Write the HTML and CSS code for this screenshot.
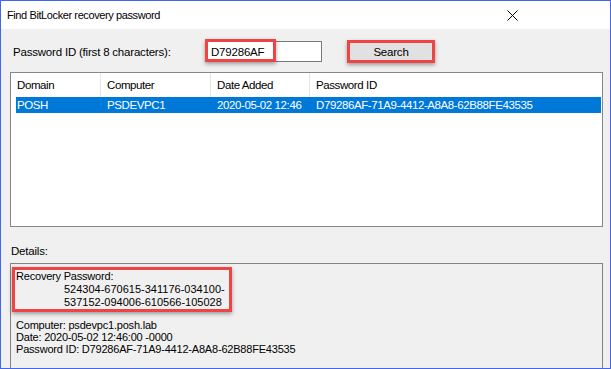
FILE: index.html
```html
<!DOCTYPE html>
<html lang="en">
<head>
    <meta charset="UTF-8">
    <title>Find BitLocker recovery password</title>
    <link rel="stylesheet" href="styles.css">
</head>
<body>
    <div class="window">
        <div class="titlebar">
            <span class="title">Find BitLocker recovery password</span>
            <svg class="close" width="11" height="11" viewBox="0 0 11 11">
                <path d="M0.5 0.5 L10.5 10.5 M10.5 0.5 L0.5 10.5" stroke="#000" stroke-width="1" fill="none"/>
            </svg>
        </div>
        <div class="content">
            <div class="search-row">
                <label class="search-label">Password ID (first 8 characters):</label>
                <div class="textbox">
                    <span class="value">D79286AF</span>
                    <span class="mark mark-id"></span>
                </div>
                <button class="btn">Search</button>
            </div>

            <div class="list">
                <div class="list-head">
                    <div class="col">Domain</div>
                    <div class="col">Computer</div>
                    <div class="col">Date Added</div>
                    <div class="col">Password ID</div>
                </div>
                <div class="list-row selected">
                    <div class="col">POSH</div>
                    <div class="col">PSDEVPC1</div>
                    <div class="col">2020-05-02 12:46</div>
                    <div class="col">D79286AF-71A9-4412-A8A8-62B88FE43535</div>
                </div>
            </div>

            <div class="details-label">Details:</div>
            <div class="details">
                <div class="recovery">
                    <div>Recovery Password:</div>
                    <div class="key">524304-670615-341176-034100-</div>
                    <div class="key">537152-094006-610566-105028</div>
                </div>
                <div class="info">
                    <div>Computer: psdevpc1.posh.lab</div>
                    <div>Date: 2020-05-02 12:46:00 -0000</div>
                    <div>Password ID: D79286AF-71A9-4412-A8A8-62B88FE43535</div>
                </div>
            </div>
        </div>
    </div>
</body>
</html>
```

FILE: styles.css
```css
:root {
    --face: #f0f0f0;
    --frame: #4167f0;
    --select: #0078d7;
    --mark: #ee4444;
}

body {
    margin: 0;
    font-family: 'Liberation Sans', Arial, sans-serif;
    font-size: 11px;
    letter-spacing: -0.2px;
    color: #000;
}

.window {
    width: 611px;
    height: 369px;
    box-sizing: border-box;
    border: 1px solid var(--frame);
    background: var(--face);
    display: flex;
    flex-direction: column;
    overflow: hidden;
}

.titlebar {
    height: 28px;
    flex-shrink: 0;
    background: #fff;
    display: flex;
    align-items: center;
    justify-content: space-between;
    padding-left: 6px;
}

.title {
    font-size: 11px;
    letter-spacing: -0.4px;
}

.close {
    margin-right: 92px;
}

.content {
    flex: 1;
    display: flex;
    flex-direction: column;
    padding: 0 7px 0 9px;
    min-height: 0;
}

.search-row {
    display: flex;
    align-items: center;
    margin-top: 11px;
    height: 23px;
}

.search-label {
    width: 194px;
    padding-left: 3px;
    font-size: 11.5px;
    letter-spacing: -0.2px;
}

.textbox {
    position: relative;
    width: 115px;
    height: 21px;
    box-sizing: border-box;
    border: 1px solid #7a7a7a;
    background: #fff;
    display: flex;
    align-items: center;
    padding-left: 3px;
    font-size: 11.5px;
    letter-spacing: -0.2px;
}

.mark {
    position: absolute;
    border: 3px solid var(--mark);
    box-shadow: 0 2px 4px rgba(0, 0, 0, 0.35);
}

.mark-id {
    left: -3px;
    top: -3px;
    width: 65px;
    height: 17px;
}

.btn {
    margin-left: 25px;
    width: 88px;
    height: 23px;
    box-sizing: border-box;
    border: 3px solid var(--mark);
    background: #e1e1e1;
    font-family: inherit;
    font-size: 11.5px;
    letter-spacing: -0.2px;
    color: #000;
    padding: 0;
    box-shadow: 0 2px 4px rgba(0, 0, 0, 0.35);
}

.list {
    margin-top: 9px;
    height: 155px;
    box-sizing: border-box;
    border: 1px solid #828790;
    background: #fff;
    font-size: 11.5px;
    letter-spacing: -0.4px;
}

.list-head,
.list-row {
    display: grid;
    grid-template-columns: 90px 110px 99px 1fr;
    align-items: center;
}

.list-head {
    height: 24px;
}

.list-head .col {
    padding-left: 6px;
    height: 24px;
    line-height: 24px;
    border-right: 1px solid #e5e5e5;
}

.list-head .col:last-child {
    border-right: none;
}

.list-row {
    height: 16px;
    margin: 0 1px 0 5px;
    grid-template-columns: 85px 110px 99px 1fr;
}

.list-row .col {
    padding-left: 6px;
    white-space: nowrap;
}

.list-row .col:first-child {
    padding-left: 1px;
}

.list-row.selected {
    background: var(--select);
    color: #fff;
}

.details-label {
    margin-top: 17px;
    line-height: 14px;
    padding-left: 1px;
    font-size: 11.5px;
    letter-spacing: -0.2px;
}

.details {
    margin-top: 5px;
    flex: 1;
    border: 1px solid #838383;
    border-bottom: none;
    font-size: 11px;
    letter-spacing: -0.2px;
    padding: 3px 0 0 1px;
}

.recovery {
    display: inline-block;
    width: 213px;
    border: 3px solid var(--mark);
    box-shadow: 0 2px 4px rgba(0, 0, 0, 0.35);
    line-height: 13px;
    padding-left: 1px;
}

.recovery .key {
    padding-left: 48px;
    letter-spacing: 0;
}

.info {
    margin-top: 7px;
    padding-left: 4px;
    line-height: 12px;
}
```
